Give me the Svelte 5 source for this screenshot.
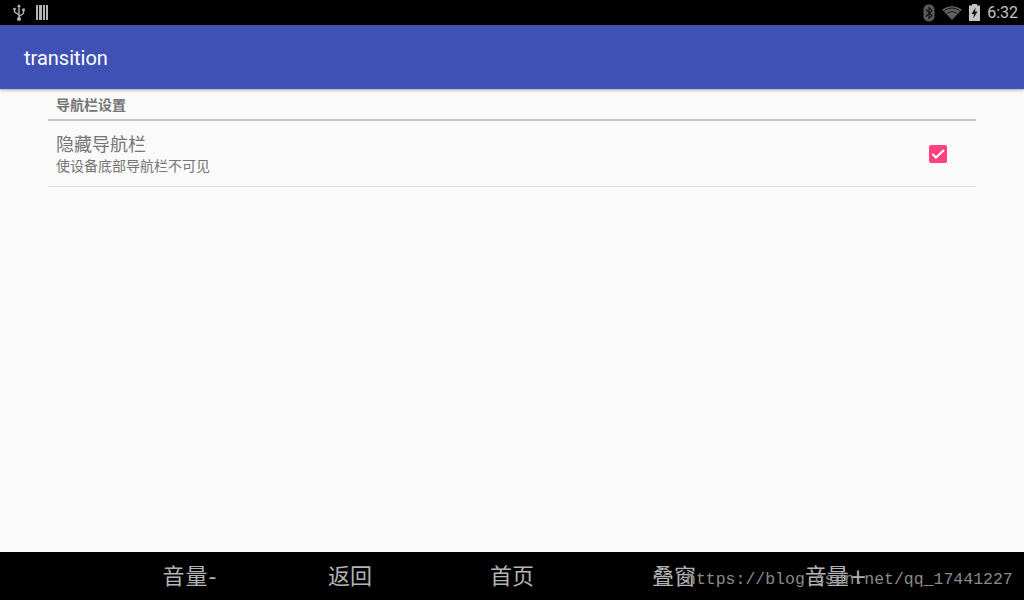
<script>
	const navItems = ['音量-', '返回', '首页', '叠窗', '音量+'];
</script>

<div class="screen">
	<div class="status">
		<div class="status__left">
			<svg width="14" height="18" viewBox="0 0 14 18">
				<path d="M7 2 V15 M7 11 L2.5 8 V5 M7 12.5 L11.5 9.5 V6.5" fill="none" stroke="#b4b4b4" stroke-width="1.4" />
				<path d="M7 0 L9 3 H5 Z" fill="#b4b4b4" />
				<circle cx="7" cy="15" r="2" fill="#b4b4b4" />
				<circle cx="2.5" cy="5" r="1.3" fill="#b4b4b4" />
				<rect x="10.2" y="4.5" width="2.6" height="2.6" fill="#b4b4b4" />
			</svg>
			<div class="bars"><i></i><i></i><i></i><i></i></div>
		</div>
		<div class="status__right">
			<svg width="12" height="18" viewBox="0 0 12 18">
				<rect x="0.5" y="0.5" width="11" height="17" rx="5" fill="#5a5a5a" />
				<path d="M3 5.5 L9 11.5 L6 14.5 V3.5 L9 6.5 L3 12.5" fill="none" stroke="#111" stroke-width="1.1" />
			</svg>
			<svg width="20" height="14" viewBox="0 0 20 14">
				<path d="M0 3.5 Q10 -3.5 20 3.5 L10 14 Z" fill="#5e5e5e" />
				<path d="M2.4 4.6 Q10 -0.6 17.6 4.6 M5 7.4 Q10 3.8 15 7.4" fill="none" stroke="#111" stroke-width="0.9" />
			</svg>
			<svg width="11" height="17" viewBox="0 0 11 17">
				<path d="M3 0 H8 V1.5 H11 V17 H0 V1.5 H3 Z" fill="#c4c4c4" />
				<path d="M6.5 3.5 L2.5 10 H5 L4.3 14.5 L8.5 7.5 H6 Z" fill="#111" />
			</svg>
			<span class="time">6:32</span>
		</div>
	</div>

	<header class="appbar">transition</header>

	<main class="prefs">
		<div class="prefs__cat">导航栏设置</div>
		<div class="pref">
			<div class="pref__text">
				<div class="pref__title">隐藏导航栏</div>
				<div class="pref__sum">使设备底部导航栏不可见</div>
			</div>
			<div class="check">
				<svg width="18" height="18" viewBox="0 0 18 18">
					<path d="M3.4 9 L7 12.6 L15 5" fill="none" stroke="#fff" stroke-width="2.1" />
				</svg>
			</div>
		</div>
	</main>

	<nav class="nav">
		{#each navItems as item}
			<div class="nav__item">{item}</div>
		{/each}
		<span class="watermark">https://blog.csdn.net/qq_17441227</span>
	</nav>
</div>

<style>
	:global(body) {
		margin: 0;
	}

	.screen {
		width: 1024px;
		height: 600px;
		display: flex;
		flex-direction: column;
		background: #fafafa;
		font-family: 'Roboto', 'Noto Sans CJK SC', sans-serif;
		overflow: hidden;
	}

	.status {
		height: 25px;
		flex: none;
		background: #000;
		display: flex;
		justify-content: space-between;
		align-items: center;
	}

	.status__left {
		display: flex;
		align-items: center;
		gap: 10px;
		padding-left: 12px;
	}

	.bars {
		display: flex;
		gap: 1px;
		width: 12px;
		height: 15px;
	}

	.bars i {
		flex: 1;
		background: #b4b4b4;
	}

	.status__right {
		display: flex;
		align-items: center;
		gap: 7px;
		padding-right: 6px;
	}

	.time {
		color: #c4c4c4;
		font-size: 16px;
	}

	.appbar {
		height: 64px;
		flex: none;
		box-sizing: border-box;
		background: #3f51b5;
		color: #fff;
		font-size: 20px;
		padding: 2px 0 0 24px;
		display: flex;
		align-items: center;
		box-shadow: 0 1px 3px rgba(0, 0, 0, 0.35);
		position: relative;
	}

	.prefs {
		flex: 1;
		padding: 0 48px;
	}

	.prefs__cat {
		height: 30px;
		padding-left: 8px;
		display: flex;
		align-items: center;
		font-size: 14px;
		font-weight: 700;
		color: #757575;
		border-bottom: 2px solid #c8c8c8;
	}

	.pref {
		height: 65px;
		padding: 0 29px 0 8px;
		display: flex;
		justify-content: space-between;
		align-items: center;
		border-bottom: 1px solid #e2e2e2;
	}

	.pref__title {
		font-size: 18px;
		line-height: 24px;
		color: #757575;
	}

	.pref__sum {
		font-size: 14px;
		line-height: 18px;
		color: #757575;
	}

	.check {
		width: 18px;
		height: 18px;
		background: #ff4081;
		border-radius: 2px;
	}

	.check svg {
		display: block;
	}

	.nav {
		height: 48px;
		flex: none;
		box-sizing: border-box;
		background: #000;
		display: flex;
		align-items: center;
		padding: 0 0 4px 107px;
		position: relative;
	}

	.nav__item {
		width: 162px;
		box-sizing: border-box;
		text-align: center;
		color: #b4b4b4;
		font-family: 'DejaVu Sans', 'Noto Sans CJK SC', sans-serif;
		font-size: 22px;
	}

	.nav__item:first-child {
		padding-left: 4px;
		letter-spacing: 1px;
	}

	.watermark {
		position: absolute;
		left: 686px;
		top: 16px;
		font-family: 'Liberation Mono', monospace;
		font-size: 16.5px;
		line-height: 24px;
		color: #8a8a8a;
	}
</style>
